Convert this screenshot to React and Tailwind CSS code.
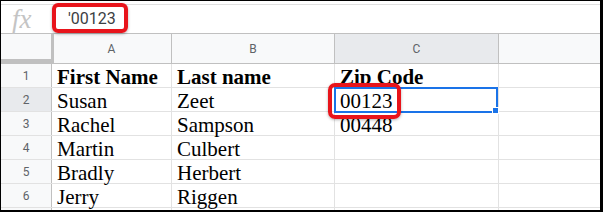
import React from "react";

const rows = [
  ["1", "First Name", "Last name", "Zip Code"],
  ["2", "Susan", "Zeet", "00123"],
  ["3", "Rachel", "Sampson", "00448"],
  ["4", "Martin", "Culbert", ""],
  ["5", "Bradly", "Herbert", ""],
  ["6", "Jerry", "Riggen", ""],
  ["", "", "", ""],
];

const serif = { fontFamily: '"Liberation Serif", "Times New Roman", serif' };
const sans = { fontFamily: 'Roboto, "Liberation Sans", Arial, sans-serif' };

function Row({ cells, index }) {
  const [num, a, b, c] = cells;
  const bold = index === 0;
  const selected = index === 1;
  const cellText = `flex items-end pl-[5px] leading-[20px] text-[21px] text-black border-r border-[#e2e2e2] ${
    bold ? "font-bold" : ""
  }`;
  return (
    <div className="flex h-[24px] border-b border-[#e2e2e2] shrink-0">
      <div
        className={`w-[51px] flex items-center justify-center text-[12px] text-[#5f6368] border-r border-[#c0c0c0] ${
          selected ? "bg-[#e8eaed]" : "bg-[#f8f9fa]"
        }`}
        style={sans}
      >
        {num}
      </div>
      <div className={`w-[120px] ${cellText}`} style={serif}>{a}</div>
      <div className={`w-[163px] ${cellText}`} style={serif}>{b}</div>
      <div className={`w-[164px] ${cellText}`} style={serif}>{c}</div>
      <div className="flex-1" />
    </div>
  );
}

export default function App() {
  return (
    <div className="relative w-[603px] h-[212px] overflow-hidden bg-white border-l border-t border-r-[3px] border-b-2 border-black">
      {/* formula bar */}
      <div className="mt-[3px] h-[30px] flex items-center border-t border-b border-t-[#e0e0e0] border-b-[#c0c0c0]">
        <div className="w-[51px] pl-[11px] text-[27px] italic text-[#c4c4c4] leading-none" style={serif}>
          fx
        </div>
        <div className="pl-[16px] text-[16px] text-[#3c4043]" style={sans}>
          '00123
        </div>
      </div>

      {/* column headers */}
      <div className="flex h-[30px] border-b border-[#c0c0c0]">
        <div className="w-[53px] bg-[#f8f9fa] border-r-[3px] border-b-[4px] border-[#c0c0c0] -mr-[2px] relative z-10" />
        <div className="w-[120px] flex items-center justify-center text-[12px] text-[#5f6368] bg-[#f8f9fa] border-r border-[#c0c0c0]" style={sans}>
          A
        </div>
        <div className="w-[163px] flex items-center justify-center text-[12px] text-[#5f6368] bg-[#f8f9fa] border-r border-[#c0c0c0]" style={sans}>
          B
        </div>
        <div className="w-[164px] flex items-center justify-center text-[12px] text-[#5f6368] bg-[#e8eaed] border-r border-[#c0c0c0]" style={sans}>
          C
        </div>
        <div className="flex-1 bg-[#f8f9fa]" />
      </div>

      {rows.map((r, i) => (
        <Row key={i} cells={r} index={i} />
      ))}

      {/* selection */}
      <div className="absolute left-[333px] top-[86px] w-[164px] h-[26px] border-2 border-[#1a73e8]" />
      <div className="absolute left-[491px] top-[106px] w-[7px] h-[7px] bg-[#1a73e8] border border-white" />

      {/* red annotation boxes */}
      <div className="absolute left-[51px] top-[2px] w-[76px] h-[30px] rounded-[6px] border-[4px] border-[#e8141b] shadow-[0_1px_3px_rgba(0,0,0,0.3)]" />
      <div className="absolute left-[327px] top-[82px] w-[73px] h-[36px] rounded-[7px] border-[4px] border-[#e8141b] shadow-[0_1px_3px_rgba(0,0,0,0.3)]" />
    </div>
  );
}
